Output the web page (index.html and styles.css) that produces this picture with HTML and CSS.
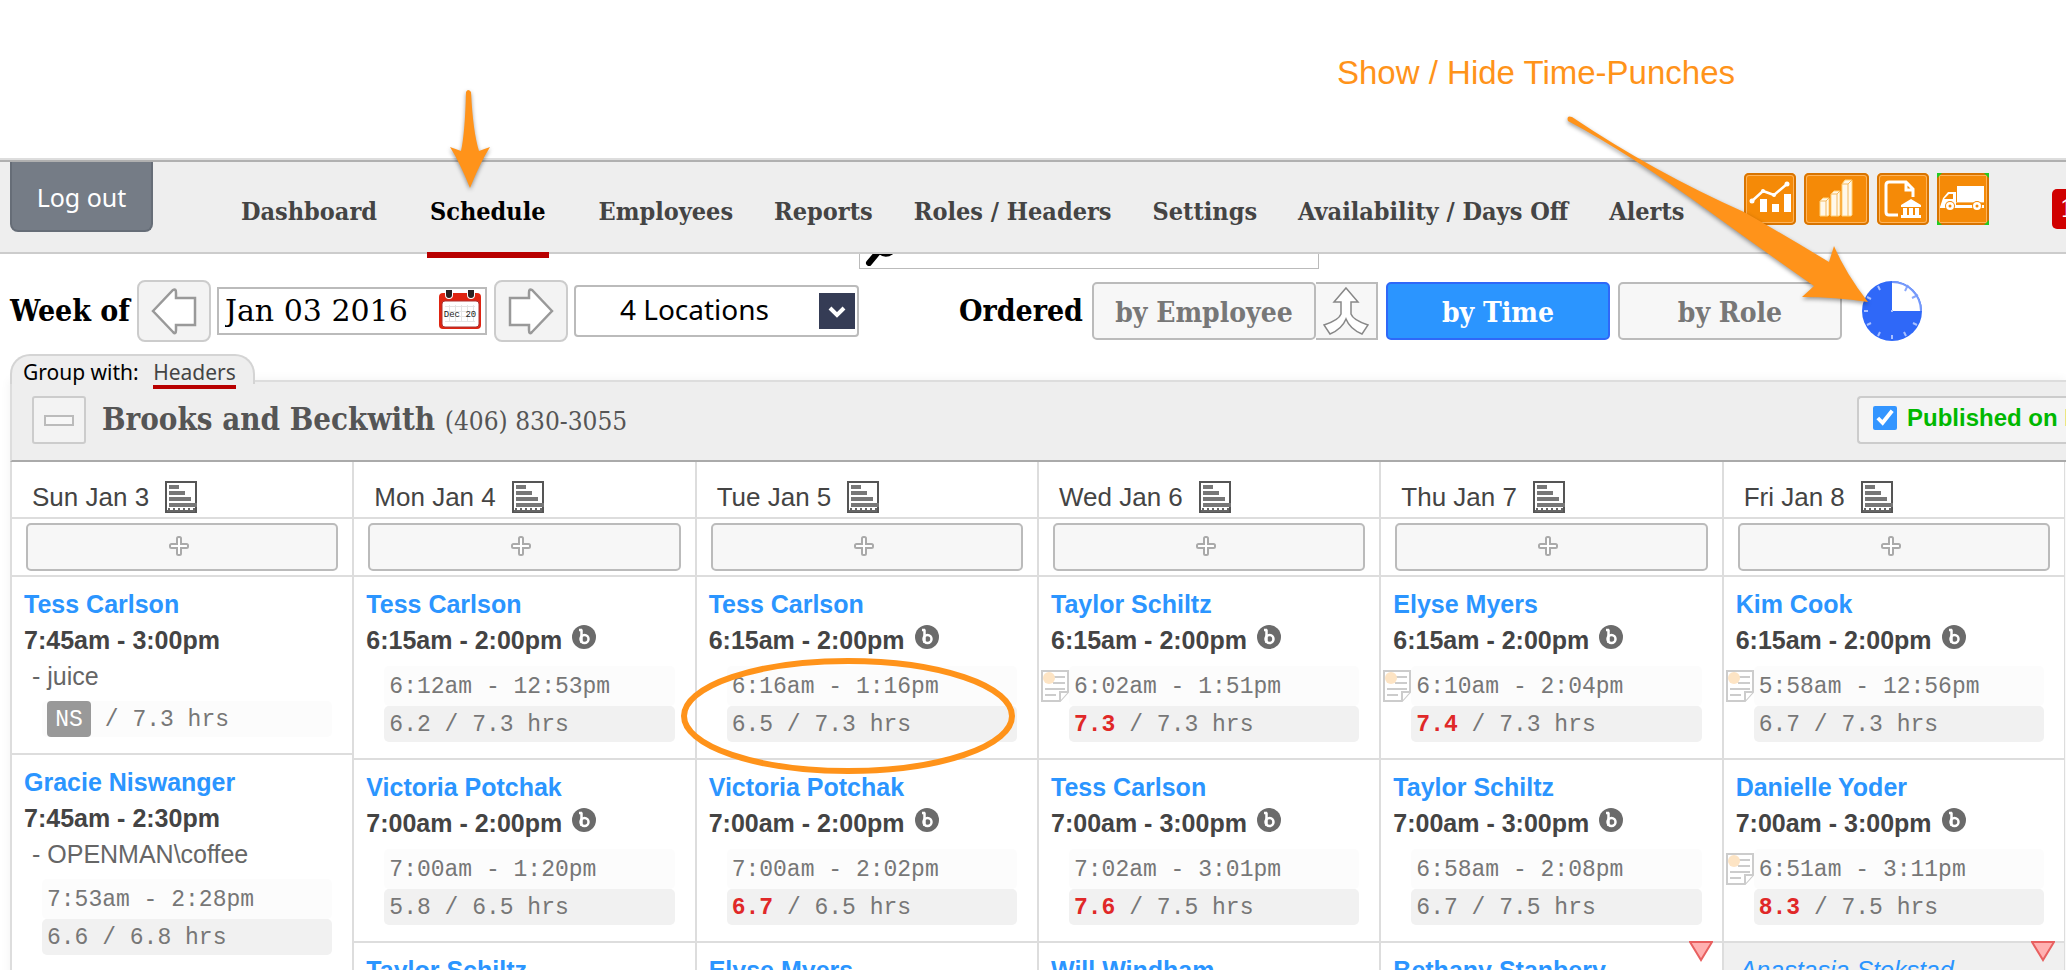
FILE: index.html
```html
<!DOCTYPE html>
<html lang="en">
<head>
<meta charset="utf-8">
<title>Schedule</title>
<link rel="stylesheet" href="styles.css">
</head>
<body>
<svg class="sprite" aria-hidden="true">
  <symbol id="chart" viewBox="0 0 32 32">
    <rect x="1" y="1" width="30" height="30" fill="#fff" stroke="#555" stroke-width="2"/>
    <path d="M4 6h10M4 12h16M4 18h22M4 24h28" stroke="#777" stroke-width="4"/>
    <path d="M2 30h28M4 30v-3M9 30v-3M14 30v-3M19 30v-3M24 30v-3M29 30v-3" stroke="#666" stroke-width="2"/>
  </symbol>
  <symbol id="plus" viewBox="0 0 20 20">
    <path d="M8 2.500a1.500 1.500 0 0 1 1.500-1.500h1a1.500 1.500 0 0 1 1.500 1.500V8h5.500a1.500 1.500 0 0 1 1.500 1.500v1a1.500 1.500 0 0 1-1.500 1.500H12v5.500a1.500 1.500 0 0 1-1.500 1.500h-1A1.500 1.500 0 0 1 8 17.500V12H2.500A1.500 1.500 0 0 1 1 10.500v-1A1.500 1.500 0 0 1 2.500 8H8z" fill="#fff" stroke="#aaa" stroke-width="2"/>
  </symbol>
  <symbol id="bid" viewBox="0 0 24 24">
    <circle cx="12" cy="12" r="12" fill="#6b6b6b"/>
    <path d="M9.500 4.500V18M7 5h3" stroke="#fff" stroke-width="2.500" fill="none"/>
    <circle cx="12.500" cy="14" r="4" stroke="#fff" stroke-width="2.500" fill="none"/>
  </symbol>
  <symbol id="note" viewBox="0 0 28 32">
    <path d="M1 1h26v21l-8 9H1z" fill="#fff" stroke="#ccc" stroke-width="2"/>
    <path d="M27 22h-8v9" fill="#fff" stroke="#ccc" stroke-width="2"/>
    <path d="M12 7h12M12 13h12M4 19h20M4 25h11" stroke="#ccc" stroke-width="2"/>
    <circle cx="8" cy="8" r="6" fill="#fde4c4"/>
  </symbol>
  <symbol id="flag" viewBox="0 0 24 21">
    <path d="M1 1h22L12 19z" fill="#ffb0b0" stroke="#e86060" stroke-width="2"/>
  </symbol>
  <symbol id="arrow" viewBox="0 0 46 48">
    <path d="M2 24 22 3q3-2 3 3v5h19v27H25v5q0 5-3 2z" fill="#fff" stroke="#999" stroke-width="2.500"/>
  </symbol>
</svg>

<div class="page">
  <header class="topbar">
    <button class="logout" type="button">Log out</button>
    <nav class="nav">
      <a href="#">Dashboard</a>
      <a href="#" class="active">Schedule</a>
      <a href="#">Employees</a>
      <a href="#">Reports</a>
      <a href="#">Roles / Headers</a>
      <a href="#">Settings</a>
      <a href="#">Availability / Days Off</a>
      <a href="#">Alerts</a>
    </nav>
    <div class="apps">
      <button type="button" class="app" aria-label="Trends">
        <svg viewBox="0 0 52 52" width="52" height="52"><path d="M16 26h7v13h-7zM28 31h7v8h-7zM40 21h7v18h-7z" fill="#fff"/><path d="M8 28 19 18l11 4 13-11" fill="none" stroke="#fff" stroke-width="2.500"/><circle cx="8" cy="28" r="2.500" fill="#fff"/><circle cx="19" cy="18" r="2" fill="#fff"/><circle cx="30" cy="22" r="2" fill="#fff"/><circle cx="43" cy="11" r="2.500" fill="#fff"/></svg>
      </button>
      <button type="button" class="app" aria-label="Sales">
        <svg viewBox="0 0 65 52" width="65" height="52"><path d="M16 28l3-3h6v17l-1 1h-8zM27 21l3-3h6v24l-1 1h-8zM38 11l3-4h7v35l-1 1h-9z" fill="#fff8ea" stroke="#ffd27a" stroke-width="1"/><path d="M22 28v15M16 28h6l3-3M33 21v22M27 21h6l3-3M44 11v32M38 11h6l4-4" fill="none" stroke="#f4b95e" stroke-width="1"/></svg>
      </button>
      <button type="button" class="app" aria-label="Bank file">
        <svg viewBox="0 0 52 52" width="52" height="52"><path d="M21 42H12q-3 0-3-3V12q0-3 3-3h17l7 7v8M29 9v8h7" fill="none" stroke="#fff" stroke-width="3"/><path d="M34 26l10 6v2H24v-2zM26 35h4v7h-4zM32 35h4v7h-4zM38 35h4v7h-4zM24 42h20v3H24z" fill="#fff"/></svg>
      </button>
      <button type="button" class="app app-truck" aria-label="Deliveries">
        <svg viewBox="0 0 52 52" width="52" height="52"><path d="M0 0h5L0 5zM52 0v5l-5-5zM0 52v-5l5 5zM52 52h-5l5-5z" fill="#2c2"/><path d="M20 13h27v16H20zM3 34l3-9 5-6h8v13h28v3H3z" fill="#fff"/><path d="M8 25l4-4h4v5H7z" fill="#f58a07"/><path d="M19 29.500h28" stroke="#f7b968"/><circle cx="13" cy="33" r="5" fill="#f58a07"/><circle cx="13" cy="33" r="4" fill="#fff"/><circle cx="13" cy="33" r="1.500" fill="#f58a07"/><circle cx="40" cy="33" r="5" fill="#f58a07"/><circle cx="40" cy="33" r="4" fill="#fff"/><circle cx="40" cy="33" r="1.500" fill="#f58a07"/></svg>
      </button>
    </div>
    <span class="badge">1</span>
  </header>

  <div class="search">
    <svg viewBox="0 0 28 12" width="28" height="12"><path d="M4 9 14-3" stroke="#000" stroke-width="6" stroke-linecap="round"/><path d="M14-2q6 6 13 1" fill="none" stroke="#000" stroke-width="3"/></svg>
  </div>

  <div class="toolbar">
    <label class="heading" for="week">Week of</label>
    <button class="step" type="button" aria-label="Previous week"><svg width="46" height="48"><use href="#arrow"/></svg></button>
    <div class="date">
      <input id="week" type="text" value="Jan 03 2016">
      <svg viewBox="0 0 42 39" width="42" height="39"><rect y="3" width="42" height="36" rx="4" fill="#df2411"/><path d="M6 0h8v5a4 4 0 0 1-8 0zM28 0h8v5a4 4 0 0 1-8 0z" fill="#fff"/><path d="M7 0h6v5a3 3 0 0 1-6 0zM29 0h6v5a3 3 0 0 1-6 0z" fill="#2a2020"/><rect x="3" y="11" width="37" height="26" rx="3" fill="#fff" stroke="#a33"/><path d="M6 16.500h30M6 21.500h30M6 26.500h30M6 31.500h30M10.500 15v17M16.500 15v17M22.500 15v17M28.500 15v17M34.500 15v17" stroke="#e4e4e4"/><text x="21" y="27" text-anchor="middle" class="cal-text">Dec 20</text></svg>
    </div>
    <button class="step" type="button" aria-label="Next week"><svg class="flip" width="46" height="48"><use href="#arrow"/></svg></button>
    <div class="locations">
      <select aria-label="Locations"><option>4 Locations</option></select>
      <svg viewBox="0 0 36 36" width="36" height="36"><rect width="36" height="36" fill="#353c55"/><path d="M11 15l7 7 7-7" fill="none" stroke="#fff" stroke-width="4"/></svg>
    </div>
    <span class="heading ordered">Ordered</span>
    <div class="orders">
      <div class="joined">
        <button class="order" type="button">by Employee</button>
        <button class="merge" type="button" aria-label="Merge"><svg viewBox="0 0 48 50" width="48" height="50"><path d="M24 2l12 14h-7v12q2 6 17 11l-6 9q-12-5-16-15-4 10-16 15l-6-9q15-5 17-11V16h-7z" fill="#fff" stroke="#888" stroke-width="1.500"/></svg></button>
      </div>
      <button class="order on" type="button">by Time</button>
      <button class="order" type="button">by Role</button>
    </div>
    <button class="clock" type="button" aria-label="Show or hide time punches">
      <svg viewBox="0 0 60 60" width="60" height="60"><circle cx="30" cy="30" r="30" fill="#2f68f8"/><path d="M30 1a29 29 0 0 1 29 29H30z" fill="#fff"/><path d="M46 4l-3 6M56 14l-6 3" stroke="#8aa8fb" stroke-width="2"/><path d="M30 1a29 29 0 0 1 29 29" fill="none" stroke="#7599fa" stroke-width="2"/><path d="M2 30h4M30 54v4M30 29v2M5 16l4 2M16 5l2 4M5 44l4-2M16 55l2-4M44 55l-2-4M55 44l-4-2" stroke="#a9c0ff" stroke-width="2"/></svg>
    </button>
  </div>

  <div class="tab">Group with: <a href="#">Headers</a></div>
  <main class="panel">
    <div class="panel-head">
      <button class="collapse" type="button" aria-label="Collapse"><span></span></button>
      <h1>Brooks and Beckwith <small>(406) 830-3055</small></h1>
      <label class="published"><input type="checkbox" checked> Published on D</label>
    </div>
    <div class="week">
      <section class="day">
        <h2>Sun Jan 3 <svg><use href="#chart"/></svg></h2>
        <div class="add"><button type="button" aria-label="Add shift"><svg><use href="#plus"/></svg></button></div>
        <article class="shift"><a href="#">Tess Carlson</a><b>7:45am - 3:00pm</b><p>- juice</p>
          <div class="hours faint"><span class="ns">NS</span> / 7.3 hrs</div></article>
        <article class="shift"><a href="#">Gracie Niswanger</a><b>7:45am - 2:30pm</b><p>- OPENMAN\coffee</p>
          <div class="punch">7:53am - 2:28pm</div><div class="hours">6.6 / 6.8 hrs</div></article>
      </section>
      <section class="day">
        <h2>Mon Jan 4 <svg><use href="#chart"/></svg></h2>
        <div class="add"><button type="button" aria-label="Add shift"><svg><use href="#plus"/></svg></button></div>
        <article class="shift"><a href="#">Tess Carlson</a><b>6:15am - 2:00pm <svg><use href="#bid"/></svg></b>
          <div class="punch">6:12am - 12:53pm</div><div class="hours">6.2 / 7.3 hrs</div></article>
        <article class="shift"><a href="#">Victoria Potchak</a><b>7:00am - 2:00pm <svg><use href="#bid"/></svg></b>
          <div class="punch">7:00am - 1:20pm</div><div class="hours">5.8 / 6.5 hrs</div></article>
        <article class="shift"><a href="#">Taylor Schiltz</a></article>
      </section>
      <section class="day">
        <h2>Tue Jan 5 <svg><use href="#chart"/></svg></h2>
        <div class="add"><button type="button" aria-label="Add shift"><svg><use href="#plus"/></svg></button></div>
        <article class="shift"><a href="#">Tess Carlson</a><b>6:15am - 2:00pm <svg><use href="#bid"/></svg></b>
          <div class="punch">6:16am - 1:16pm</div><div class="hours">6.5 / 7.3 hrs</div></article>
        <article class="shift"><a href="#">Victoria Potchak</a><b>7:00am - 2:00pm <svg><use href="#bid"/></svg></b>
          <div class="punch">7:00am - 2:02pm</div><div class="hours"><em>6.7</em> / 6.5 hrs</div></article>
        <article class="shift"><a href="#">Elyse Myers</a></article>
      </section>
      <section class="day">
        <h2>Wed Jan 6 <svg><use href="#chart"/></svg></h2>
        <div class="add"><button type="button" aria-label="Add shift"><svg><use href="#plus"/></svg></button></div>
        <article class="shift"><a href="#">Taylor Schiltz</a><b>6:15am - 2:00pm <svg><use href="#bid"/></svg></b>
          <div class="punch"><svg class="note"><use href="#note"/></svg>6:02am - 1:51pm</div><div class="hours"><em>7.3</em> / 7.3 hrs</div></article>
        <article class="shift"><a href="#">Tess Carlson</a><b>7:00am - 3:00pm <svg><use href="#bid"/></svg></b>
          <div class="punch">7:02am - 3:01pm</div><div class="hours"><em>7.6</em> / 7.5 hrs</div></article>
        <article class="shift"><a href="#">Will Windham</a></article>
      </section>
      <section class="day">
        <h2>Thu Jan 7 <svg><use href="#chart"/></svg></h2>
        <div class="add"><button type="button" aria-label="Add shift"><svg><use href="#plus"/></svg></button></div>
        <article class="shift"><a href="#">Elyse Myers</a><b>6:15am - 2:00pm <svg><use href="#bid"/></svg></b>
          <div class="punch"><svg class="note"><use href="#note"/></svg>6:10am - 2:04pm</div><div class="hours"><em>7.4</em> / 7.3 hrs</div></article>
        <article class="shift"><a href="#">Taylor Schiltz</a><b>7:00am - 3:00pm <svg><use href="#bid"/></svg></b>
          <div class="punch">6:58am - 2:08pm</div><div class="hours">6.7 / 7.5 hrs</div></article>
        <article class="shift"><svg class="flag"><use href="#flag"/></svg><a href="#">Bethany Stanbery</a></article>
      </section>
      <section class="day">
        <h2>Fri Jan 8 <svg><use href="#chart"/></svg></h2>
        <div class="add"><button type="button" aria-label="Add shift"><svg><use href="#plus"/></svg></button></div>
        <article class="shift"><a href="#">Kim Cook</a><b>6:15am - 2:00pm <svg><use href="#bid"/></svg></b>
          <div class="punch"><svg class="note"><use href="#note"/></svg>5:58am - 12:56pm</div><div class="hours">6.7 / 7.3 hrs</div></article>
        <article class="shift"><a href="#">Danielle Yoder</a><b>7:00am - 3:00pm <svg><use href="#bid"/></svg></b>
          <div class="punch"><svg class="note"><use href="#note"/></svg>6:51am - 3:11pm</div><div class="hours"><em>8.3</em> / 7.5 hrs</div></article>
        <article class="shift open"><svg class="flag"><use href="#flag"/></svg><a href="#">Anastasia Stokstad</a></article>
      </section>
    </div>
  </main>

  <div class="callouts">
    <p>Show / Hide Time-Punches</p>
    <svg viewBox="0 0 2066 970" width="2066" height="970">
      <path d="M466 92q2-4 5 0 2 40 8 59l11-4q-10 16-20 41-10-25-20-41l11 4q4-18 5-59z"/>
      <path d="M1568 121q-2-6 4-4 82 55 172 95 42 24 85 50l5-16q12 28 34 56-33-5-66-5l12-11q-60-42-104-74-80-58-142-91z"/>
      <ellipse cx="848" cy="716" rx="164" ry="55"/>
    </svg>
  </div>
</div>
</body>
</html>
```
FILE: styles.css
```css
* { box-sizing: border-box; }

body {
  margin: 0;
  background: #fff;
  color: #444;
  font-family: "Liberation Sans", Arial, sans-serif;
}

button, input, select { font: inherit; color: inherit; margin: 0; padding: 0; }
a { text-decoration: none; color: inherit; }
svg { display: block; flex: none; }
.sprite { position: absolute; width: 0; height: 0; }

.page {
  position: relative;
  height: 100vh;
  padding-top: 158px;
  overflow: hidden;
}

/* top bar */
.topbar {
  position: relative;
  z-index: 2;
  display: flex;
  height: 96px;
  padding-left: 10px;
  background: #eee;
  border-top: 2px solid #ddd;
  border-bottom: 2px solid #ccc;
  box-shadow: inset 0 2px #b0b0b0;
}

.logout {
  width: 143px;
  height: 70px;
  margin-top: 2px;
  padding-top: 2px;
  border: 2px solid #666d77;
  border-top: 0;
  border-radius: 0 0 8px 8px;
  background: #757c86;
  color: #fff;
  font-family: "Noto Sans", sans-serif;
  font-size: 25px;
}

.nav {
  display: flex;
  gap: 35px;
  margin-left: 85px;
  font: bold 25px/32px "DejaVu Serif Condensed", "DejaVu Serif", serif;
  white-space: nowrap;
}
.nav a { height: 98px; padding: 36px 3px 0; }
.nav a.active { margin: 0 12px; color: #000; border-bottom: 6px solid #b80000; }

.apps { display: flex; gap: 8px; margin: 13px 0 0 auto; }
.app {
  height: 52px;
  border: 0;
  border-radius: 5px;
  background: #f58a07;
  box-shadow: inset 0 0 0 2px #d87400, inset 0 0 0 3px #ffb45a;
}
.app-truck { border-radius: 0; }

.badge {
  width: 14px;
  height: 40px;
  margin: 29px 0 0 63px;
  padding-left: 8px;
  overflow: hidden;
  border-radius: 5px 0 0 5px;
  background: #d00000;
  color: #fff;
  font: bold 24px/40px "DejaVu Serif Condensed", serif;
}

.search {
  position: absolute;
  top: 254px;
  left: 859px;
  width: 460px;
  height: 15px;
  padding-left: 5px;
  border: 1px solid #bbb;
  border-top: 0;
}

/* toolbar */
.toolbar {
  display: flex;
  align-items: center;
  padding: 26px 10px 12px;
  white-space: nowrap;
}
.heading { color: #000; font: bold 30px/36px "DejaVu Serif Condensed", "DejaVu Serif", serif; }

.step {
  display: grid;
  place-items: center;
  width: 74px;
  height: 62px;
  margin-left: 7px;
  border: 2px solid #ccc;
  border-radius: 8px;
  background: #f3f3f3;
}
.flip { transform: scaleX(-1); }

.date {
  display: flex;
  align-items: center;
  width: 270px;
  height: 48px;
  margin-left: 6px;
  padding: 0 4px 4px 6px;
  border: 2px solid #bbb;
}
.date input {
  flex: 1;
  min-width: 0;
  padding-top: 4px;
  border: 0;
  outline: 0;
  background: none;
  color: #000;
  font: 30px/40px "DejaVu Serif", serif;
}
.cal-text { font: 9px "Liberation Mono", monospace; fill: #222; }

.locations {
  display: flex;
  align-items: center;
  width: 285px;
  height: 52px;
  margin-left: 6px;
  padding-right: 2px;
  border: 2px solid #bbb;
  border-radius: 4px;
}
.locations select {
  flex: 1;
  height: 100%;
  padding: 0 0 4px 44px;
  appearance: none;
  border: 0;
  background: none;
  color: #000;
  font: 28px "Noto Sans", sans-serif;
}

.ordered { margin-left: 100px; }
.orders { display: flex; gap: 8px; margin-left: 9px; }
.joined { display: flex; }
.order {
  width: 224px;
  height: 58px;
  padding-top: 4px;
  border: 2px solid #bbb;
  border-radius: 5px;
  background: #f7f7f7;
  color: #777;
  font: bold 28px/36px "DejaVu Serif Condensed", "DejaVu Serif", serif;
}
.order.on { background: #2b95ff; border-color: #2f68f8; color: #fff; }
.merge {
  display: grid;
  place-items: center;
  width: 62px;
  border: 2px solid #bbb;
  border-left: 0;
  background: #f7f7f7;
}
.clock { margin-left: 20px; border: 0; background: none; }

/* panel */
.tab {
  position: relative;
  z-index: 1;
  width: 245px;
  height: 30px;
  margin: 0 0 -4px 10px;
  padding-left: 11px;
  border: 2px solid #d4d4d4;
  border-bottom: 0;
  border-radius: 20px 20px 0 0;
  background: #eee;
  color: #000;
  font: 21px/32px "Noto Sans", sans-serif;
  white-space: nowrap;
}
.tab a {
  display: inline-block;
  height: 33px;
  margin-left: 9px;
  border-bottom: 4px solid #b80000;
  color: #444;
}

.panel {
  margin: 0 1px 0 10px;
  box-shadow: 0 0 10px rgba(0, 0, 0, .06);
}
.panel-head {
  display: flex;
  align-items: center;
  height: 82px;
  margin-right: -1px;
  padding: 0 0 2px 20px;
  border: 2px solid #ddd;
  border-bottom-color: #aaa;
  border-right: 0;
  background: #eee;
}
.collapse {
  display: grid;
  place-items: center;
  width: 54px;
  height: 48px;
  border: 2px solid #ccc;
  border-radius: 3px;
  background: #f3f3f3;
}
.collapse span { width: 30px; height: 11px; border: 2px solid #bbb; background: #f7f7f7; }
.panel h1 {
  margin: 0 0 0 16px;
  color: #555;
  font: bold 31px/40px "DejaVu Serif Condensed", "DejaVu Serif", serif;
  white-space: nowrap;
}
.panel h1 small { font-size: 26px; font-weight: normal; }
.published {
  display: flex;
  align-items: center;
  gap: 10px;
  width: 209px;
  height: 48px;
  margin-left: auto;
  padding: 0 0 4px 14px;
  overflow: hidden;
  border: 2px solid #ccc;
  border-right: 0;
  border-radius: 4px 0 0 4px;
  background: #f4f4f4;
  color: #00b800;
  font-size: 24px;
  font-weight: bold;
  white-space: nowrap;
}
.published input { flex: none; width: 24px; height: 24px; margin: 0; accent-color: #3395ff; }

/* week grid */
.week {
  display: grid;
  grid-template-columns: repeat(6, 1fr);
  height: 560px;
  border-right: 1px solid #ddd;
}
.day { border-left: 2px solid #ddd; font-size: 25px; line-height: 36px; }
.day h2 {
  display: flex;
  align-items: center;
  gap: 16px;
  height: 57px;
  margin: 0;
  padding: 14px 0 0 20px;
  border-bottom: 2px solid #ddd;
  font-size: 26px;
  font-weight: normal;
  white-space: nowrap;
}
.day h2 svg { width: 32px; height: 32px; }
.add { padding: 4px 14px; border-bottom: 2px solid #ddd; }
.add button {
  display: grid;
  place-items: center;
  width: 100%;
  height: 48px;
  padding: 0 6px 2px 0;
  border: 2px solid #bbb;
  border-radius: 5px;
  background: #f7f7f7;
}
.add svg { width: 20px; height: 20px; }

.shift { position: relative; padding: 9px 0 16px 12px; border-bottom: 2px solid #ddd; }
.shift a { display: block; color: #2b95ff; font-weight: bold; }
.shift b { display: flex; gap: 10px; margin-bottom: 8px; }
.shift b svg { width: 24px; height: 24px; margin-top: 3px; }
.shift p { margin: -8px 0 7px 8px; color: #666; }
.shift.open { background: #f0f0f0; padding-left: 16px; }
.shift.open a { font-weight: normal; font-style: italic; }
.flag { position: absolute; top: -2px; right: 9px; width: 24px; height: 21px; }

.punch, .hours {
  position: relative;
  height: 36px;
  margin: 0 20px 0 18px;
  padding-left: 5px;
  border-radius: 5px;
  background: #f1f1f1;
  color: #777;
  font: 23px/38px "Liberation Mono", monospace;
  white-space: nowrap;
}
.punch { height: 40px; background: #fcfcfc; line-height: 42px; }
.hours.faint { background: #fcfcfc; }
.hours em { color: #e02828; font-style: normal; font-weight: bold; }
.ns {
  display: inline-block;
  width: 44px;
  height: 36px;
  border-radius: 4px;
  background: #999;
  color: #fff;
  text-align: center;
}
.note { position: absolute; top: 4px; left: -28px; width: 28px; height: 32px; }

/* callouts drawn over the page */
.callouts { position: absolute; inset: 0; z-index: 3; overflow: hidden; pointer-events: none; }
.callouts p {
  position: absolute;
  top: 53px;
  left: 1337px;
  margin: 0;
  color: #ff931a;
  font-size: 33px;
  line-height: 40px;
  white-space: nowrap;
}
.callouts path { fill: #ff931a; filter: drop-shadow(0 2px 2px rgba(0, 0, 0, .4)); }
.callouts ellipse { fill: none; stroke: #ff931a; stroke-width: 6px; }
```
